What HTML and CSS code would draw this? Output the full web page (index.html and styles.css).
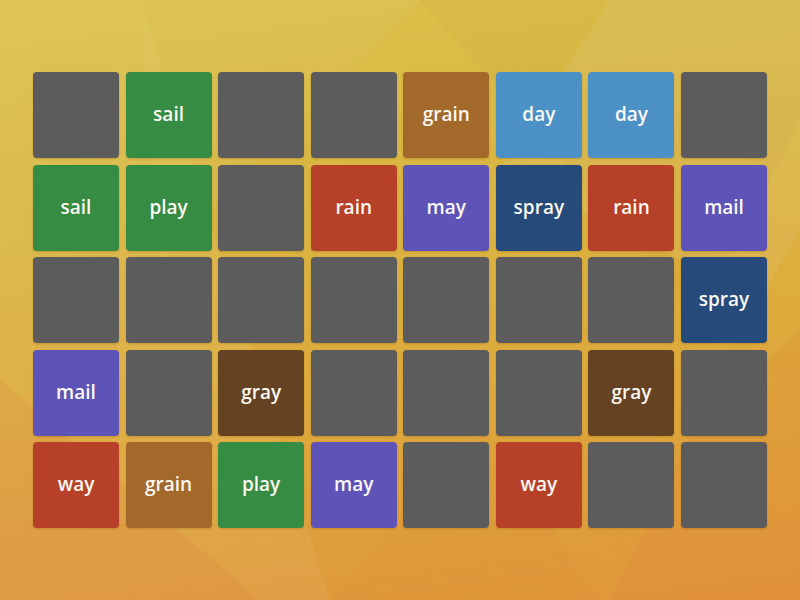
FILE: index.html
```html
<!DOCTYPE html>
<html>
<head>
<meta charset="utf-8">
<link rel="stylesheet" href="styles.css">
</head>
<body>
<div class="bg">
  <svg class="shapes" width="800" height="600" viewBox="0 0 800 600">
    <polygon points="0,0 140,0 330,600 0,600" fill="#ffffff" opacity="0.06"/>
    <polygon points="140,0 420,0 160,260" fill="#ffffff" opacity="0.04"/>
    <polygon points="420,0 930,0 800,120 700,320" fill="#b07a20" opacity="0.05"/>
    <polygon points="610,0 930,0 760,300 500,170" fill="#ffffff" opacity="0.07"/>
    <polygon points="0,380 0,600 260,600" fill="#e0603a" opacity="0.12"/>
    <polygon points="700,420 800,330 800,600 610,600" fill="#e07030" opacity="0.10"/>
    <polygon points="330,600 480,420 600,600" fill="#e07030" opacity="0.06"/>
  </svg>
  <main class="board">
    <div class="card grey"></div>
    <div class="card green">sail</div>
    <div class="card grey"></div>
    <div class="card grey"></div>
    <div class="card brown">grain</div>
    <div class="card blue">day</div>
    <div class="card blue">day</div>
    <div class="card grey"></div>

    <div class="card green">sail</div>
    <div class="card green">play</div>
    <div class="card grey"></div>
    <div class="card red">rain</div>
    <div class="card purple">may</div>
    <div class="card navy">spray</div>
    <div class="card red">rain</div>
    <div class="card purple">mail</div>

    <div class="card grey"></div>
    <div class="card grey"></div>
    <div class="card grey"></div>
    <div class="card grey"></div>
    <div class="card grey"></div>
    <div class="card grey"></div>
    <div class="card grey"></div>
    <div class="card navy">spray</div>

    <div class="card purple">mail</div>
    <div class="card grey"></div>
    <div class="card dbrown">gray</div>
    <div class="card grey"></div>
    <div class="card grey"></div>
    <div class="card grey"></div>
    <div class="card dbrown">gray</div>
    <div class="card grey"></div>

    <div class="card red">way</div>
    <div class="card brown">grain</div>
    <div class="card green">play</div>
    <div class="card purple">may</div>
    <div class="card grey"></div>
    <div class="card red">way</div>
    <div class="card grey"></div>
    <div class="card grey"></div>
  </main>
</div>
</body>
</html>
```
FILE: styles.css
```css
html, body {
  margin: 0;
  padding: 0;
}
body {
  width: 800px;
  height: 600px;
  overflow: hidden;
  font-family: "Open Sans", "Noto Sans", sans-serif;
}
.bg {
  position: relative;
  width: 800px;
  height: 600px;
  background: linear-gradient(172deg, #dcc34c 0%, #d9b743 30%, #ddab3c 60%, #e0953a 100%);
  padding-top: 72px;
  box-sizing: border-box;
}
.shapes {
  position: absolute;
  left: 0;
  top: 0;
}
.board {
  position: relative;
  margin-left: 33px;
  width: 734px;
  display: grid;
  grid-template-columns: repeat(8, 1fr);
  grid-auto-rows: 86px;
  gap: 6.6px;
}
.card {
  border-radius: 4px;
  display: flex;
  align-items: center;
  justify-content: center;
  color: #fbf8f2;
  font-size: 19px;
  font-weight: 600;
  padding-bottom: 2px;
  box-sizing: border-box;
  box-shadow: 0 1px 2px rgba(120, 70, 0, 0.25);
}
.grey { background: #5c5c5c; }
.green { background: #378c43; }
.blue { background: #4b91c6; }
.brown { background: #a2692b; }
.navy { background: #264a79; }
.red { background: #b74029; }
.purple { background: #5e53b6; }
.dbrown { background: #654221; }
```
